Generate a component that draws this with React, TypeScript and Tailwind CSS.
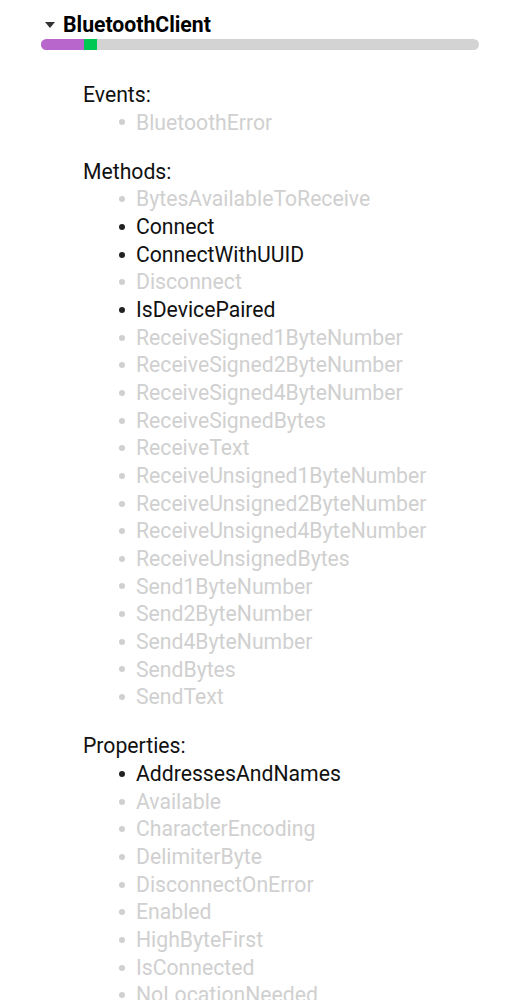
import React from 'react';

type Item = { name: string; on?: boolean };

const sections: { title: string; items: Item[] }[] = [
  { title: 'Events:', items: [{ name: 'BluetoothError' }] },
  {
    title: 'Methods:',
    items: [
      { name: 'BytesAvailableToReceive' },
      { name: 'Connect', on: true },
      { name: 'ConnectWithUUID', on: true },
      { name: 'Disconnect' },
      { name: 'IsDevicePaired', on: true },
      { name: 'ReceiveSigned1ByteNumber' },
      { name: 'ReceiveSigned2ByteNumber' },
      { name: 'ReceiveSigned4ByteNumber' },
      { name: 'ReceiveSignedBytes' },
      { name: 'ReceiveText' },
      { name: 'ReceiveUnsigned1ByteNumber' },
      { name: 'ReceiveUnsigned2ByteNumber' },
      { name: 'ReceiveUnsigned4ByteNumber' },
      { name: 'ReceiveUnsignedBytes' },
      { name: 'Send1ByteNumber' },
      { name: 'Send2ByteNumber' },
      { name: 'Send4ByteNumber' },
      { name: 'SendBytes' },
      { name: 'SendText' },
    ],
  },
  {
    title: 'Properties:',
    items: [
      { name: 'AddressesAndNames', on: true },
      { name: 'Available' },
      { name: 'CharacterEncoding' },
      { name: 'DelimiterByte' },
      { name: 'DisconnectOnError' },
      { name: 'Enabled' },
      { name: 'HighByteFirst' },
      { name: 'IsConnected' },
      { name: 'NoLocationNeeded' },
    ],
  },
];

export default function App() {
  return (
    <div className="w-[520px] h-[1000px] overflow-hidden bg-white font-['Roboto',sans-serif]">
      <div className="px-[41px] pt-[12px]">
        <div className="flex items-center h-[25px]">
          <svg width="10" height="6" viewBox="0 0 10 6" className="ml-[4px] mr-[8px]">
            <polygon points="0,0 10,0 5,6" fill="#333" />
          </svg>
          <span className="text-[21.2px] leading-[25px] font-bold text-black">BluetoothClient</span>
        </div>
        <div className="mt-[2px] h-[11px] rounded-full bg-[#d3d3d3] flex overflow-hidden">
          <div className="w-[43px] bg-[#b966cc]" />
          <div className="w-[13px] bg-[#00c853]" />
        </div>

        <div className="pt-[31px] pl-[42px]">
          {sections.map((s) => (
            <div key={s.title} className="mb-[21.5px]">
              <div className="text-[21.2px] leading-[27.65px] text-[#111]">{s.title}</div>
              <ul>
                {s.items.map((it) => (
                  <li
                    key={it.name}
                    className={`flex items-center text-[21.2px] leading-[27.65px] pl-[36px] ${
                      it.on ? 'text-[#111]' : 'text-[#d0d0d0]'
                    }`}
                  >
                    <span
                      className={`w-[6px] h-[6px] rounded-full mr-[11px] ${
                        it.on ? 'bg-[#222]' : 'bg-[#d0d0d0]'
                      }`}
                    />
                    {it.name}
                  </li>
                ))}
              </ul>
            </div>
          ))}
        </div>
      </div>
    </div>
  );
}
